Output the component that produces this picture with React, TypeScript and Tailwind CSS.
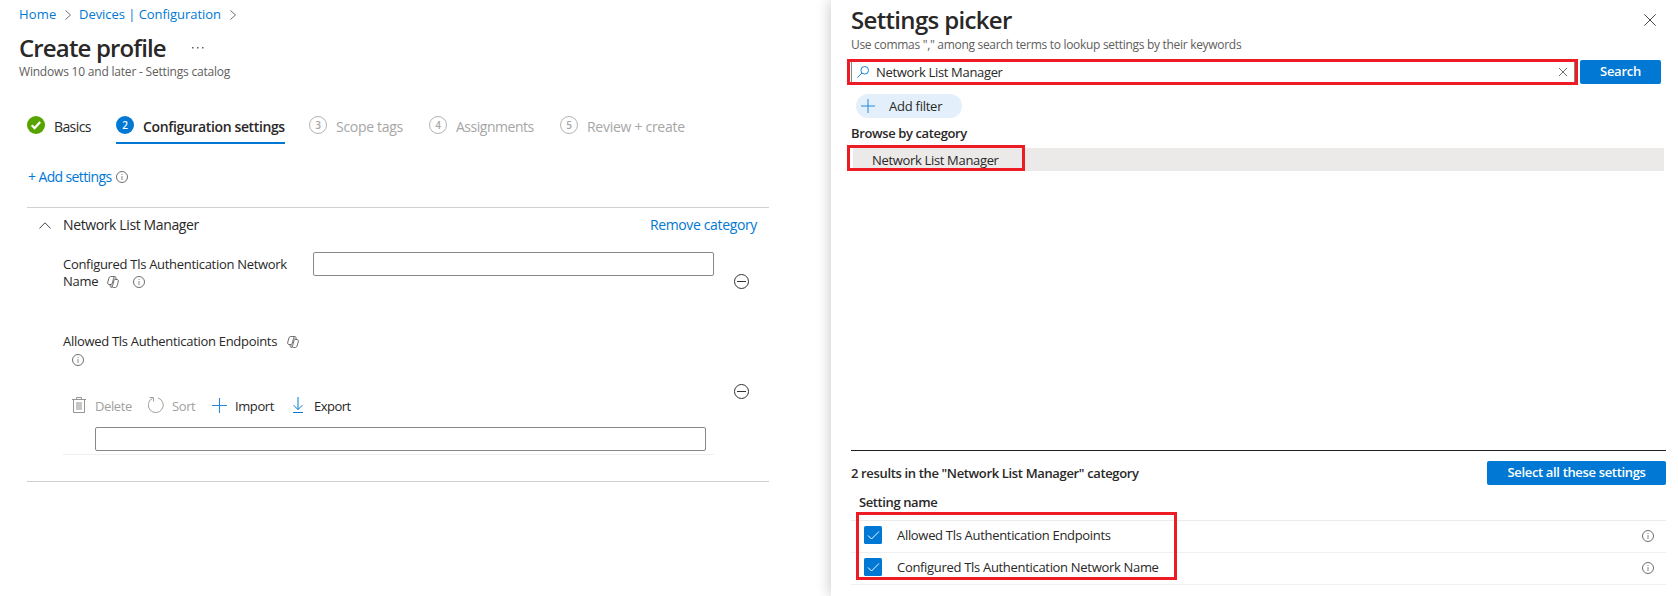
import type { ReactNode } from 'react';

type Step = { n: number; label: string; state: 'done' | 'current' | 'todo'; box: string; text: string };

const steps: Step[] = [
  { n: 1, label: 'Basics', state: 'done', box: 'w-[89px]', text: 'tracking-[-0.6px]' },
  { n: 2, label: 'Configuration settings', state: 'current', box: 'w-[169px] mr-6', text: 'tracking-[-0.37px]' },
  { n: 3, label: 'Scope tags', state: 'todo', box: 'w-[120px]', text: 'tracking-[-0.3px]' },
  { n: 4, label: 'Assignments', state: 'todo', box: 'w-[131px]', text: 'tracking-[-0.48px]' },
  { n: 5, label: 'Review + create', state: 'todo', box: 'w-[140px]', text: 'tracking-[-0.28px]' },
];

const results = ['Allowed Tls Authentication Endpoints', 'Configured Tls Authentication Network Name'];

function InfoIcon({ className = '' }: { className?: string }) {
  return (
    <svg viewBox="0 0 12 12" className={`size-3 shrink-0 ${className}`} fill="none" stroke="#605e5c">
      <circle cx="6" cy="6" r="5.5" strokeWidth="0.9" />
      <path d="M6 5v4M6 3v1" strokeWidth="1" stroke="#8a8886" />
    </svg>
  );
}

function CopilotIcon({ className = '' }: { className?: string }) {
  return (
    <svg viewBox="0 0 12 12" className={`size-3 shrink-0 ${className}`} fill="none" stroke="#605e5c" strokeWidth="0.9">
      <path d="M7.2 2.6 7 1.6C6.8.9 6.4.5 5.7.5H3.6C2.8.5 2.3 1 2 1.9L.8 6C.4 7.5.8 8.5 2 8.5h1.4" />
      <path d="M4.8 9.4 5 10.4c.2.7.6 1.1 1.3 1.1h2.1c.8 0 1.3-.5 1.6-1.4L11.2 6c.4-1.5 0-2.5-1.2-2.5H8.6" />
      <path d="M5.7.5h2.2c.5 0 .8.4.9.9l.5 2.1H8.2c-.7 0-1.1.4-1.3 1.1L5.6 9.8c-.3 1.1-.7 1.7-1.3 1.7-.5 0-.8-.4-.9-.9l-.5-2.1h1c.7 0 1.1-.4 1.3-1.1L6.7 2.2" />
    </svg>
  );
}

function CrumbChevron() {
  return (
    <svg viewBox="0 0 6 10" className="h-2.5 w-1.5" fill="none" stroke="#605e5c" strokeWidth="0.9">
      <path d="M.5.5 5.5 5 .5 9.5" />
    </svg>
  );
}

function RemoveButton({ className = '' }: { className?: string }) {
  return (
    <button className={className}>
      <svg viewBox="0 0 15 15" className="size-[15px]" fill="none" stroke="#323130">
        <circle cx="7.5" cy="7.5" r="7" />
        <path d="M3 7.5h9" />
      </svg>
    </button>
  );
}

function PlusIcon({ className = '' }: { className?: string }) {
  return (
    <svg viewBox="0 0 15 15" className={className} fill="none" stroke="#2b88d8" strokeWidth="1.1">
      <path d="M7.5 0v15M0 7.5h15" />
    </svg>
  );
}

function StepBadge({ step }: { step: Step }) {
  if (step.state === 'done') {
    return (
      <svg viewBox="0 0 18 18" className="size-[18px] shrink-0">
        <circle cx="9" cy="9" r="9" fill="#57a300" />
        <path d="m4.7 9.2 2.9 2.9 5.6-6" fill="none" stroke="#fff" strokeWidth="2.2" />
      </svg>
    );
  }
  return (
    <span
      className={`flex size-[18px] shrink-0 items-center justify-center rounded-full text-[10px] font-semibold leading-none ${
        step.state === 'current' ? 'bg-[#0078d4] text-white' : 'border border-[#b3b3b3] text-[#a6a6a6]'
      }`}
    >
      {step.n}
    </span>
  );
}

function Tool({ icon, children, className }: { icon: ReactNode; children: ReactNode; className: string }) {
  return (
    <button className={`flex items-center ${className}`}>
      {icon}
      <span className="pt-[3px]">{children}</span>
    </button>
  );
}

function CreateProfile() {
  return (
    <main className="h-full w-[831px] shrink-0 pl-[19px]">
      <nav className="flex h-7 items-center pt-0.5 text-[13px] text-[#0078d4]">
        <a className="w-[38px] tracking-[0.2px]">Home</a>
        <span className="ml-2 mr-2"><CrumbChevron /></span>
        <a className="w-[143px] tracking-[-0.05px]">Devices | Configuration</a>
        <span className="ml-2"><CrumbChevron /></span>
      </nav>
      <div className="flex h-[38px] items-center">
        <h1 className="w-[173px] pt-px text-[24px] font-semibold tracking-[-0.85px]">Create profile</h1>
        <svg viewBox="0 0 12 2" className="mt-0.5 h-0.5 w-3" fill="#605e5c">
          <path d="M0 0h1.5v1.5H0zM5 0h1.5v1.5H5zM10 0h1.5v1.5H10z" />
        </svg>
      </div>
      <p className="h-[50px] text-[12px] leading-3 tracking-[-0.2px] text-[#605e5c]">Windows 10 and later - Settings catalog</p>

      <ol className="ml-2 flex h-7 text-[14px]">
        {steps.map((step) => (
          <li
            key={step.n}
            className={`flex h-7 gap-[9px] ${step.box} ${step.state === 'current' ? 'border-b-2 border-[#0078d4] font-semibold' : ''} ${
              step.state === 'todo' ? 'text-[#a6a6a6]' : ''
            }`}
          >
            <StepBadge step={step} />
            <span className={`pt-0.5 leading-[18px] ${step.text}`}>{step.label}</span>
          </li>
        ))}
      </ol>

      <div className="ml-[9px] mt-6 flex h-[18px] items-center text-[14px] text-[#0078d4]">
        <a className="w-[88px] pb-px tracking-[-0.62px]">+ Add settings</a>
        <InfoIcon />
      </div>

      <section className="ml-2 mt-[21px] h-[275px] w-[742px] border-y border-[#d2d0ce] text-[13px]">
        <header className="flex h-[35px] items-center pl-3 text-[14px]">
          <svg viewBox="0 0 12 7" className="h-[7px] w-3" fill="none" stroke="#323130" strokeWidth="0.9">
            <path d="M.4 6.5 6 .8l5.6 5.7" />
          </svg>
          <h2 className="ml-3 grow pb-0.5 tracking-[-0.38px]">Network List Manager</h2>
          <a className="mr-3 pb-0.5 tracking-[-0.36px] text-[#0078d4]">Remove category</a>
        </header>
        <div className="flex h-[76px] pl-9 pt-[9px]">
          <div className="w-[250px] pt-1 leading-[17px] tracking-[-0.3px]">
            Configured Tls Authentication Network
            <div className="flex items-center">
              <span className="w-[44px]">Name</span>
              <CopilotIcon />
              <InfoIcon className="ml-3.5" />
            </div>
          </div>
          <input className="h-6 w-[401px] rounded-xs border border-[#8a8886]" />
          <RemoveButton className="ml-5 mt-[22px] h-[15px]" />
        </div>
        <div className="flex pl-9">
          <div className="w-[651px] border-b border-[#f0efee] pt-[14px]">
            <div className="flex h-[18px] items-center">
              <span className="w-[224px] tracking-[-0.3px]">Allowed Tls Authentication Endpoints</span>
              <CopilotIcon />
            </div>
            <InfoIcon className="ml-[9px] mt-[3px]" />
            <div className="mt-[29px] flex h-[20px] tracking-[-0.4px]">
              <Tool
                className="ml-[9px] w-[76px] gap-[9px] text-[#a19f9d]"
                icon={
                  <svg viewBox="0 0 14 16" className="h-4 w-3.5" fill="none" stroke="#979593">
                    <path d="M0 2.5h14M4.5 2.5v-2h5v2M1.5 2.5v13h11v-13" />
                    <path d="M4 5h6v8H4z" fill="#c8c6c4" stroke="none" />
                  </svg>
                }
              >
                Delete
              </Tool>
              <Tool
                className="w-[64px] gap-2 text-[#a19f9d]"
                icon={
                  <svg viewBox="0 0 16 16" className="size-4" fill="none" stroke="#a19f9d">
                    <path d="M10 .9a7.5 7.5 0 1 1-5.5.4M1.5.5h4v4" />
                  </svg>
                }
              >
                Sort
              </Tool>
              <Tool className="w-[81px] gap-2" icon={<PlusIcon className="size-[15px]" />}>Import</Tool>
              <Tool
                className="gap-[11px] tracking-[-0.5px]"
                icon={
                  <svg viewBox="0 0 10 16" className="h-4 w-2.5" fill="none" stroke="#0078d4">
                    <path d="M5 0v12.5M.6 8.2 5 12.6l4.4-4.4M0 15.5h10" />
                  </svg>
                }
              >
                Export
              </Tool>
            </div>
            <input className="mb-[3px] ml-8 mt-[12px] block h-6 w-[611px] rounded-xs border border-[#8a8886]" />
          </div>
          <RemoveButton className="ml-5 mt-[65px] h-[15px]" />
        </div>
      </section>
    </main>
  );
}

function SettingsPicker() {
  return (
    <aside className="relative h-full grow bg-white pl-5 text-[13px] shadow-[0_0_14px_rgba(0,0,0,0.24)]">
      <header className="flex h-9 items-center justify-between pr-[22px] pt-1">
        <h1 className="pb-px text-[24px] font-semibold tracking-[-0.67px]">Settings picker</h1>
        <svg viewBox="0 0 12 12" className="size-3" fill="none" stroke="#323130" strokeWidth="0.9">
          <path d="m.3.3 11.4 11.4M11.7.3.3 11.7" />
        </svg>
      </header>
      <p className="h-[23px] text-[12px] leading-[17px] tracking-[-0.3px] text-[#605e5c]">
        Use commas "," among search terms to lookup settings by their keywords
      </p>

      <div className="-ml-1 flex h-[26px] items-start gap-0.5">
        <div className="h-[26px] w-[731px] border-[3px] border-[#ed1c24] pl-px">
          <div className="flex h-full items-center border-x border-[#8a8886] pl-[5px] pr-[7px]">
            <svg viewBox="0 0 12 12" className="size-3" fill="none" stroke="#0078d4" strokeWidth="0.9">
              <circle cx="7.7" cy="4.3" r="3.8" />
              <path d="M5 7 .3 11.7" />
            </svg>
            <span className="ml-[7px] grow pt-0.5 tracking-[-0.33px]">Network List Manager</span>
            <svg viewBox="0 0 8 8" className="size-2" fill="none" stroke="#605e5c" strokeWidth="0.9">
              <path d="m0 0 8 8M8 0 0 8" />
            </svg>
          </div>
        </div>
        <button className="mt-px h-6 w-[81px] rounded-xs bg-[#0078d4] font-semibold tracking-[-0.25px] text-white">Search</button>
      </div>

      <button className="ml-[5px] mt-[9px] flex h-6 w-[106px] items-center rounded-full bg-[#e3f0fb] pl-[5px]">
        <PlusIcon className="size-3.5" />
        <span className="ml-3.5 pt-0.5 tracking-[-0.25px]">Add filter</span>
      </button>
      <h3 className="h-[27px] pt-[5px] font-semibold leading-5 tracking-[-0.38px]">Browse by category</h3>
      <div className="-ml-1 flex h-[26px] items-end">
        <div className="h-[26px] w-[178px] border-[3px] border-[#ed1c24] pl-[3px]">
          <div className="h-full bg-[#ebeae9] pl-[19px] leading-[25px] tracking-[-0.33px]">Network List Manager</div>
        </div>
        <div className="h-[23px] w-[639px] bg-[#ebeae9]" />
      </div>

      <div className="mt-[279px] w-[815px] border-t border-[#201f1e]">
        <div className="flex h-[43px] items-center justify-between">
          <h3 className="pt-0.5 font-semibold tracking-[-0.35px]">2 results in the "Network List Manager" category</h3>
          <button className="h-6 w-[179px] rounded-xs bg-[#0078d4] font-semibold tracking-[-0.34px] text-white">
            Select all these settings
          </button>
        </div>
        <div className="h-[27px] border-b border-[#edebe9] pl-2 font-semibold leading-4 tracking-[-0.4px]">Setting name</div>
        {results.map((name) => (
          <label key={name} className="flex h-8 items-center border-b border-[#f0efee] pb-[3px] pl-[13px] pr-3">
            <svg viewBox="0 0 18 18" className="size-[18px]">
              <rect width="18" height="18" rx="1.5" fill="#0078d4" />
              <path d="m4 9.5 3.5 3.5L15 5.5" fill="none" stroke="#fff" />
            </svg>
            <span className="ml-[15px] grow pt-px tracking-[-0.31px]">{name}</span>
            <InfoIcon className="mt-0.5" />
          </label>
        ))}
      </div>
      <div className="absolute left-[25px] top-[512px] h-[68px] w-[321px] border-[3px] border-[#ed1c24]" />
    </aside>
  );
}

export default function App() {
  return (
    <div className="flex h-[596px] w-[1678px] overflow-hidden whitespace-nowrap bg-white font-['Open_Sans',sans-serif] text-[#292827]">
      <CreateProfile />
      <SettingsPicker />
    </div>
  );
}
